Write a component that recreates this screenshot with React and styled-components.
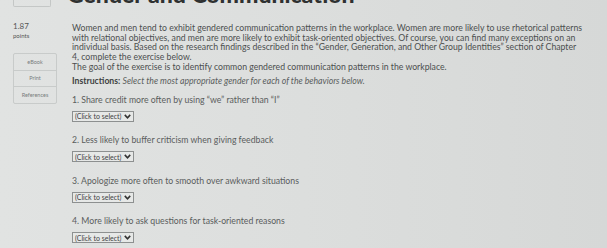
import React from 'react';
import styled, { createGlobalStyle } from 'styled-components';

const Global = createGlobalStyle`
  html, body {
    margin: 0;
    padding: 0;
    width: 607px;
    height: 248px;
    overflow: hidden;
    background: linear-gradient(90deg, #e1e3e2 0%, #dcdedd 50%, #d6d8d7 100%);
  }
  body {
    font-family: Lato, "Open Sans", sans-serif;
    color: #4f5252;
  }
`;

const introLines = [
  'Women and men tend to exhibit gendered communication patterns in the workplace. Women are more likely to use rhetorical patterns',
  'with relational objectives, and men are more likely to exhibit task-oriented objectives. Of course, you can find many exceptions on an',
  'individual basis. Based on the research findings described in the \u201cGender, Generation, and Other Group Identities\u201d section of Chapter',
  '4, complete the exercise below.',
  'The goal of the exercise is to identify common gendered communication patterns in the workplace.',
];

const questions = [
  '1. Share credit more often by using \u201cwe\u201d rather than \u201cI\u201d',
  '2. Less likely to buffer criticism when giving feedback',
  '3. Apologize more often to smooth over awkward situations',
  '4. More likely to ask questions for task-oriented reasons',
];

const Page = () => (
  <Layout>
    <Side>
      <TopStub />
      <Points>
        1.87
        <small>points</small>
      </Points>
      <ToolList>
        <ToolItem>eBook</ToolItem>
        <ToolItem>Print</ToolItem>
        <ToolItem>References</ToolItem>
      </ToolList>
    </Side>
    <Main>
      <Title>Gender and Communication</Title>
      <Intro>
        {introLines.map((l) => (
          <Line key={l}>{l}</Line>
        ))}
      </Intro>
      <Instructions>
        <b>Instructions:</b> <i>Select the most appropriate gender for each of the behaviors below.</i>
      </Instructions>
      {questions.map((q) => (
        <Question key={q}>
          <QText>{q}</QText>
          <Picker>
            (Click to select)
            <svg width="7" height="5" viewBox="0 0 7 5">
              <path d="M0.8 0.9 L3.5 3.8 L6.2 0.9" fill="none" stroke="#333" strokeWidth="1.6" />
            </svg>
          </Picker>
        </Question>
      ))}
    </Main>
  </Layout>
);

const Layout = styled.div`
  display: flex;
  gap: 16px;
  padding-left: 13px;
`;

const Side = styled.div`
  width: 43px;
  display: flex;
  flex-direction: column;
`;

const TopStub = styled.div`
  height: 7px;
  border: 1px solid #c4c7c6;
  border-top: none;
  border-radius: 0 0 2px 2px;
  margin-top: -1px;
  width: 36px;
`;

const Points = styled.div`
  margin-top: 14px;
  font-size: 8px;
  line-height: 10px;
  color: #555;
  small {
    display: block;
    font-size: 6px;
    line-height: 8px;
    margin-top: 1px;
  }
`;

const ToolList = styled.div`
  margin-top: 13px;
  border: 1px solid #c8cbca;
  border-radius: 2px;
  display: flex;
  flex-direction: column;
  width: 42px;
`;

const ToolItem = styled.div`
  height: 15.5px;
  font-size: 5.5px;
  display: flex;
  align-items: center;
  justify-content: center;
  color: #7a7e7e;
  & + & {
    border-top: 1px solid #c8cbca;
  }
`;

const Main = styled.div`
  flex: 1;
  display: flex;
  flex-direction: column;
`;

const Title = styled.div`
  font-size: 23px;
  font-weight: 900;
  color: #2f3131;
  line-height: 23px;
  height: 23px;
  margin-top: -17px;
  margin-left: -5px;
  white-space: nowrap;
`;

const Intro = styled.div`
  margin-top: 17px;
  font-size: 8.7px;
  line-height: 9.7px;
  color: #4c4f4f;
`;

const Line = styled.div`
  white-space: nowrap;
`;

const Instructions = styled.div`
  margin-top: 3px;
  font-size: 8.7px;
  line-height: 11px;
  color: #4c4f4f;
  b {
    font-weight: 700;
    color: #3e4141;
  }
  i {
    color: #5a5d5d;
  }
`;

const Question = styled.div`
  display: flex;
  flex-direction: column;
  align-items: flex-start;
  margin-top: 8px;
  & + & {
    margin-top: 12.5px;
  }
`;

const QText = styled.div`
  font-size: 8.7px;
  line-height: 11px;
  color: #5a5d5d;
`;

const Picker = styled.div`
  margin-top: 6px;
  height: 11px;
  width: 62px;
  box-sizing: border-box;
  border: 1px solid #8d9090;
  background: #e6e8e7;
  font-size: 7px;
  color: #3f4242;
  display: flex;
  align-items: center;
  justify-content: space-between;
  padding: 0 2px 0 2px;
`;

export default function App() {
  return (
    <>
      <Global />
      <Page />
    </>
  );
}
